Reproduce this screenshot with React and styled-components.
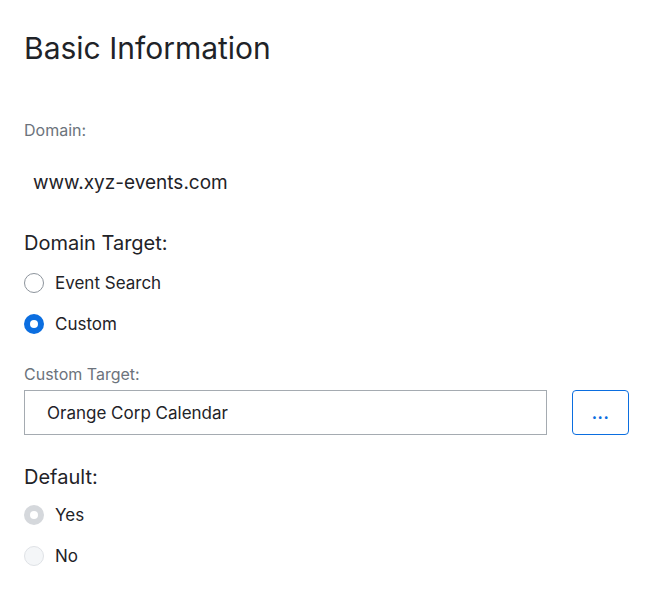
import React, { useState } from "react";
import styled, { createGlobalStyle } from "styled-components";

const GlobalStyle = createGlobalStyle`
  body {
    margin: 0;
    background: #ffffff;
    font-family: "Inter", "Noto Sans", sans-serif;
    color: #1f2328;
  }
`;

const Page = styled.div`
  padding: 30px 25px 24px 24px;
  display: flex;
  flex-direction: column;
`;

const Title = styled.h1`
  margin: 0;
  font-size: 30px;
  font-weight: 400;
  line-height: 36px;
  color: #1f2328;
`;

const SmallLabel = styled.div`
  font-size: 16px;
  line-height: 18px;
  color: #6c737c;
  margin-top: ${p => p.$top || 0}px;
`;

const Value = styled.div`
  font-size: 19px;
  line-height: 22px;
  padding-left: 9px;
  margin-top: 33px;
`;

const GroupLabel = styled.div`
  font-size: 20px;
  line-height: 24px;
  margin-top: ${p => p.$top || 0}px;
`;

const RadioList = styled.div`
  display: flex;
  flex-direction: column;
  gap: 19px;
  margin-top: ${p => p.$top || 17}px;
`;

const RadioRow = styled.label`
  display: flex;
  align-items: center;
  gap: 11px;
  font-size: 17px;
  line-height: 22px;
  cursor: ${p => (p.$disabled ? "default" : "pointer")};
`;

const Dot = styled.span`
  width: 20px;
  height: 20px;
  border-radius: 50%;
  box-sizing: border-box;
  flex-shrink: 0;
  display: flex;
  align-items: center;
  justify-content: center;
  background: ${p =>
    p.$checked ? (p.$disabled ? "#d5d8dc" : "#0b6ee0") : p.$disabled ? "#f4f6f8" : "#ffffff"};
  border: 1px solid
    ${p => (p.$checked ? "transparent" : p.$disabled ? "#dfe2e6" : "#8d949c")};
  &::after {
    content: "";
    display: ${p => (p.$checked ? "block" : "none")};
    width: 8px;
    height: 8px;
    border-radius: 50%;
    background: #ffffff;
  }
`;

const InputRow = styled.div`
  display: flex;
  gap: 25px;
  margin-top: 7px;
`;

const TextInput = styled.div`
  flex: 1;
  height: 45px;
  box-sizing: border-box;
  border: 1px solid #a5abb1;
  display: flex;
  align-items: center;
  padding-left: 22px;
  font-size: 17px;
`;

const MoreButton = styled.button`
  width: 57px;
  height: 45px;
  box-sizing: border-box;
  border: 1px solid #0b6ee0;
  border-radius: 4px;
  background: #ffffff;
  color: #0b6ee0;
  font-family: inherit;
  font-size: 16px;
  font-weight: 700;
  padding: 0 0 13px 0;
  display: flex;
  align-items: flex-end;
  justify-content: center;
  line-height: 1;
  letter-spacing: 0.5px;
`;

const Radio = ({ label, checked, disabled, onSelect }) => (
  <RadioRow $disabled={disabled} onClick={() => !disabled && onSelect && onSelect()}>
    <Dot $checked={checked} $disabled={disabled} />
    {label}
  </RadioRow>
);

export default function App() {
  const [target, setTarget] = useState("custom");
  return (
    <>
      <GlobalStyle />
      <Page>
        <Title>Basic Information</Title>
        <SmallLabel $top={55}>Domain:</SmallLabel>
        <Value>www.xyz-events.com</Value>

        <GroupLabel $top={37}>Domain Target:</GroupLabel>
        <RadioList>
          <Radio label="Event Search" checked={target === "search"} onSelect={() => setTarget("search")} />
          <Radio label="Custom" checked={target === "custom"} onSelect={() => setTarget("custom")} />
        </RadioList>

        <SmallLabel $top={30}>Custom Target:</SmallLabel>
        <InputRow>
          <TextInput>Orange Corp Calendar</TextInput>
          <MoreButton>...</MoreButton>
        </InputRow>

        <GroupLabel $top={30}>Default:</GroupLabel>
        <RadioList $top={15}>
          <Radio label="Yes" checked disabled />
          <Radio label="No" disabled />
        </RadioList>
      </Page>
    </>
  );
}
